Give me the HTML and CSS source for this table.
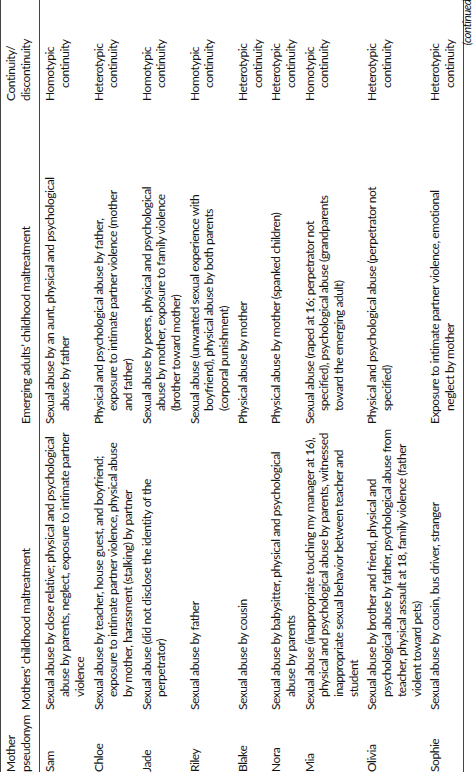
FILE: index.html
```html
<!DOCTYPE html>
<html lang="en">
<head>
<meta charset="utf-8">
<title>Table</title>
<link rel="stylesheet" href="styles.css">
</head>
<body>
<div class="sheet">
  <table class="tbl">
    <colgroup>
      <col class="w1"><col class="w2"><col class="w3"><col class="w4">
    </colgroup>
    <thead>
      <tr>
        <th><span class="l">Mother</span><span class="l">pseudonym</span></th>
        <th><span class="l">Mothers’ childhood maltreatment</span></th>
        <th><span class="l">Emerging adults’ childhood maltreatment</span></th>
        <th class="h4"><span class="l">Continuity/</span><span class="l">discontinuity</span></th>
      </tr>
    </thead>
    <tbody>
      <tr>
        <td><span class="l">Sam</span></td>
        <td><span class="l">Sexual abuse by close relative; physical and psychological</span><span class="l">abuse by parents, neglect, exposure to intimate partner</span><span class="l">violence</span></td>
        <td><span class="l">Sexual abuse by an aunt, physical and psychological</span><span class="l">abuse by father</span></td>
        <td><span class="l">Homotypic</span><span class="l">continuity</span></td>
      </tr>
      <tr>
        <td><span class="l">Chloe</span></td>
        <td><span class="l">Sexual abuse by teacher, house guest, and boyfriend;</span><span class="l">exposure to intimate partner violence, physical abuse</span><span class="l">by mother, harassment (stalking) by partner</span></td>
        <td><span class="l">Physical and psychological abuse by father,</span><span class="l">exposure to intimate partner violence (mother</span><span class="l">and father)</span></td>
        <td><span class="l">Heterotypic</span><span class="l">continuity</span></td>
      </tr>
      <tr>
        <td><span class="l">Jade</span></td>
        <td><span class="l">Sexual abuse (did not disclose the identity of the</span><span class="l">perpetrator)</span></td>
        <td><span class="l">Sexual abuse by peers, physical and psychological</span><span class="l">abuse by mother, exposure to family violence</span><span class="l">(brother toward mother)</span></td>
        <td><span class="l">Homotypic</span><span class="l">continuity</span></td>
      </tr>
      <tr>
        <td><span class="l">Riley</span></td>
        <td><span class="l">Sexual abuse by father</span></td>
        <td><span class="l">Sexual abuse (unwanted sexual experience with</span><span class="l">boyfriend), physical abuse by both parents</span><span class="l">(corporal punishment)</span></td>
        <td><span class="l">Homotypic</span><span class="l">continuity</span></td>
      </tr>
      <tr>
        <td><span class="l">Blake</span></td>
        <td><span class="l">Sexual abuse by cousin</span></td>
        <td><span class="l">Physical abuse by mother</span></td>
        <td><span class="l">Heterotypic</span><span class="l">continuity</span></td>
      </tr>
      <tr>
        <td><span class="l">Nora</span></td>
        <td><span class="l">Sexual abuse by babysitter, physical and psychological</span><span class="l">abuse by parents</span></td>
        <td><span class="l">Physical abuse by mother (spanked children)</span></td>
        <td><span class="l">Heterotypic</span><span class="l">continuity</span></td>
      </tr>
      <tr>
        <td><span class="l">Mia</span></td>
        <td><span class="l">Sexual abuse (inappropriate touching my manager at 16),</span><span class="l">physical and psychological abuse by parents, witnessed</span><span class="l">inappropriate sexual behavior between teacher and</span><span class="l">student</span></td>
        <td><span class="l">Sexual abuse (raped at 16; perpetrator not</span><span class="l">specified), psychological abuse (grandparents</span><span class="l">toward the emerging adult)</span></td>
        <td><span class="l">Homotypic</span><span class="l">continuity</span></td>
      </tr>
      <tr>
        <td><span class="l">Olivia</span></td>
        <td><span class="l">Sexual abuse by brother and friend, physical and</span><span class="l">psychological abuse by father, psychological abuse from</span><span class="l">teacher, physical assault at 18, family violence (father</span><span class="l">violent toward pets)</span></td>
        <td><span class="l">Physical and psychological abuse (perpetrator not</span><span class="l">specified)</span></td>
        <td><span class="l">Heterotypic</span><span class="l">continuity</span></td>
      </tr>
      <tr class="last">
        <td><span class="l">Sophie</span></td>
        <td><span class="l">Sexual abuse by cousin, bus driver, stranger</span></td>
        <td><span class="l">Exposure to intimate partner violence, emotional</span><span class="l">neglect by mother</span></td>
        <td><span class="l">Heterotypic</span><span class="l">continuity</span></td>
      </tr>
    </tbody>
  </table>
  <div class="continued">(continued)</div>
</div>
</body>
</html>
```

FILE: styles.css
```css
html, body {
  margin: 0;
  padding: 0;
  background: #ffffff;
  overflow: hidden;
}

body {
  width: 474px;
  height: 780px;
  font-family: Lato, "Liberation Sans", sans-serif;
  font-size: 12px;
  letter-spacing: -0.45px;
  color: #141414;
}

.sheet {
  width: 780px;
  height: 474px;
  padding-left: 2px;
  box-sizing: border-box;
  transform-origin: 0 0;
  transform: translateY(780px) rotate(-90deg);
}

.tbl {
  border-collapse: collapse;
  table-layout: fixed;
  width: 778px;
  margin-top: -6px;
  border-top: 1px solid #444;
  border-bottom: 1px solid #444;
  line-height: 14.7px;
}

.w1 { width: 62px; }
.w2 { width: 286px; }
.w3 { width: 323px; }
.w4 { width: 107px; }

.tbl th {
  font-weight: normal;
  text-align: left;
  vertical-align: bottom;
  padding: 3px 0 6px 0;
  border-bottom: 1px solid #444;
}

.tbl th.h4 {
  text-align: right;
  padding-right: 1px;
}

.tbl th.h4 .l {
  text-align: left;
}

.tbl td {
  vertical-align: top;
  text-align: left;
  padding: 3px 0 1px 0;
}

.tbl tr.last td {
  padding-bottom: 5px;
}

.l {
  display: block;
  white-space: nowrap;
}

.l + .l {
  padding-left: 13px;
}

.tbl th .l + .l {
  padding-left: 0;
}

.continued {
  font-style: italic;
  text-align: right;
  font-size: 11.5px;
  line-height: 14px;
  margin-top: -4px;
  padding-right: 3px;
}
```
